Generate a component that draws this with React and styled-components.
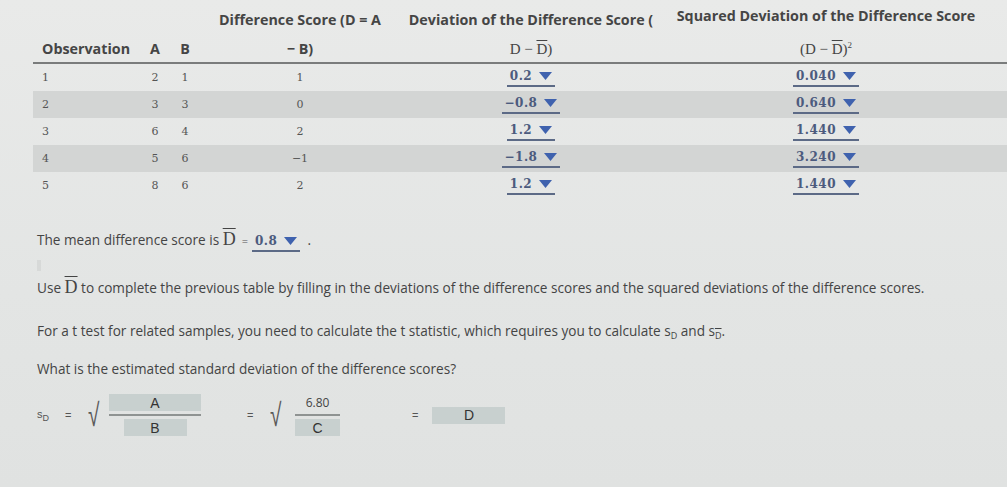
import styled, { createGlobalStyle } from "styled-components";

const Global = createGlobalStyle`
  body {
    margin: 0;
    background: #e5e7e6;
    font-family: "Open Sans", "Liberation Sans", sans-serif;
    color: #4a4a4a;
  }
`;

const Page = styled.div`
  width: 1007px;
  height: 487px;
  overflow: hidden;
  background: linear-gradient(180deg, #e9eae9 0%, #e3e5e4 60%, #e0e2e1 100%);
`;

const Table = styled.div`
  margin-left: 33px;
  padding-top: 6px;
  display: grid;
  grid-template-columns: 107px 30px 30px 200px 262px 328px 1fr;
`;

const HeadCell = styled.div`
  display: flex;
  flex-direction: column;
  justify-content: flex-end;
  align-items: ${(p) => (p.$left ? "flex-start" : "center")};
  padding-left: ${(p) => (p.$left ? "9px" : "0")};
  padding-bottom: 4px;
  gap: 11px;
  height: 52px;
  font-weight: 700;
  font-size: 14.3px;
  line-height: 18px;
  color: #454545;
  white-space: nowrap;
  border-bottom: 2px solid #7a7c7c;
`;

const Row = styled.div`
  display: contents;
  & > div {
    background: ${(p) => (p.$shade ? "#d3d5d4" : "transparent")};
  }
`;

const Cell = styled.div`
  height: 27px;
  display: flex;
  align-items: center;
  justify-content: ${(p) => (p.$left ? "flex-start" : "center")};
  padding-left: ${(p) => (p.$left ? "9px" : "0")};
  font-family: "DejaVu Serif", "Liberation Serif", serif;
  font-size: 11px;
  color: #555;
`;

const Math = styled.span`
  font-family: "Liberation Serif", "DejaVu Serif", serif;
  font-weight: 400;
  font-size: ${(p) => p.$size || 15}px;
`;

const Bar = styled.span`
  text-decoration: overline;
`;

const Select = styled.span`
  display: inline-flex;
  align-items: center;
  gap: 7px;
  padding: 0 3px 1px;
  border-bottom: 2px solid #5c6a86;
  font-family: "DejaVu Serif", "Liberation Serif", serif;
  font-weight: 700;
  font-size: 12px;
  letter-spacing: 0.5px;
  color: #4c5b7e;
  line-height: 16px;
`;

const Arrow = () => (
  <svg width="13" height="8" viewBox="0 0 13 8">
    <polygon points="0,0 13,0 6.5,8" fill="#3f62ae" />
  </svg>
);

const Body = styled.div`
  padding: 0 0 0 37px;
  font-size: 13.6px;
  color: #444;
`;

const Para = styled.p`
  margin: 0;
  margin-top: ${(p) => p.$top}px;
  line-height: 20px;
  height: 20px;
  white-space: nowrap;
`;

const Mark = styled.div`
  width: 4px;
  height: 11px;
  margin-top: 11px;
  background: #d7d9d8;
`;

const Sub = styled.span`
  font-size: 9px;
  vertical-align: -3px;
`;

const Formula = styled.div`
  margin-top: 15px;
  display: flex;
  align-items: center;
  font-family: "Liberation Sans", "Open Sans", sans-serif;
  color: #3a3a3a;
`;

const Sym = styled.span`
  font-size: ${(p) => p.$size || 12}px;
  margin: 0 ${(p) => p.$mr || 0}px 0 ${(p) => p.$ml || 0}px;
  color: #555;
`;

const Root = styled.span`
  font-family: "DejaVu Sans", sans-serif;
  font-size: 32px;
  font-weight: 200;
  color: #5a5a5a;
  margin-left: ${(p) => p.$ml}px;
  transform: scaleX(0.65);
  line-height: 32px;
`;

const Frac = styled.div`
  display: flex;
  flex-direction: column;
  align-items: center;
  margin-left: ${(p) => p.$ml}px;
  width: ${(p) => p.$w}px;
  gap: 3px;
`;

const FracLine = styled.div`
  width: 100%;
  height: 2px;
  background: #8f9392;
`;

const Box = styled.div`
  width: ${(p) => p.$w}px;
  height: 17px;
  margin-left: ${(p) => p.$ml || 0}px;
  background: #c8d0cf;
  display: flex;
  align-items: center;
  justify-content: center;
  font-size: 14px;
  color: #333;
`;

const Plain = styled.div`
  height: 17px;
  display: flex;
  align-items: center;
  font-family: "Open Sans", sans-serif;
  font-size: 12px;
  color: #444;
`;

const rows = [
  [1, 2, 1, 1, "0.2", "0.040"],
  [2, 3, 3, 0, "\u22120.8", "0.640"],
  [3, 6, 4, 2, "1.2", "1.440"],
  [4, 5, 6, "\u22121", "\u22121.8", "3.240"],
  [5, 8, 6, 2, "1.2", "1.440"],
];

export default function App() {
  return (
    <Page>
      <Global />
      <Table>
        <HeadCell $left>Observation</HeadCell>
        <HeadCell>A</HeadCell>
        <HeadCell>B</HeadCell>
        <HeadCell>
          <span>Difference Score (D = A</span>
          <span>− B)</span>
        </HeadCell>
        <HeadCell>
          <span>Deviation of the Difference Score (</span>
          <Math>
            D − <Bar>D</Bar>)
          </Math>
        </HeadCell>
        <HeadCell>
          <span>Squared Deviation of the Difference Score</span>
          <Math>
            (D − <Bar>D</Bar>)<sup style={{ fontSize: 9 }}>2</sup>
          </Math>
        </HeadCell>
        <HeadCell />
        {rows.map((r, i) => (
          <Row key={r[0]} $shade={i % 2 === 1}>
            <Cell $left>{r[0]}</Cell>
            <Cell>{r[1]}</Cell>
            <Cell>{r[2]}</Cell>
            <Cell>{r[3]}</Cell>
            <Cell>
              <Select>
                {r[4]}
                <Arrow />
              </Select>
            </Cell>
            <Cell>
              <Select>
                {r[5]}
                <Arrow />
              </Select>
            </Cell>
            <Cell />
          </Row>
        ))}
      </Table>
      <Body>
        <Para $top={30}>
          The mean difference score is <Math $size={18}><Bar>D</Bar></Math>
          <Sym $size={11} $ml={6} $mr={4}>=</Sym>
          <Select>
            0.8
            <Arrow />
          </Select>
          <span>&nbsp; .</span>
        </Para>
        <Mark />
        <Para $top={6}>
          Use <Math $size={18}><Bar>D</Bar></Math> to complete the previous table by filling in the
          deviations of the difference scores and the squared deviations of the difference scores.
        </Para>
        <Para $top={24}>
          For a t test for related samples, you need to calculate the t statistic, which requires you to
          calculate s<Sub>D</Sub> and s<Sub><Bar>D</Bar></Sub>.
        </Para>
        <Para $top={18}>What is the estimated standard deviation of the difference scores?</Para>
        <Formula>
          <Sym $size={11}>
            s<Sub>D</Sub>
          </Sym>
          <Sym $size={11} $ml={16}>=</Sym>
          <Root $ml={14}>√</Root>
          <Frac $ml={6} $w={92}>
            <Box $w={92}>A</Box>
            <FracLine />
            <Box $w={63}>B</Box>
          </Frac>
          <Sym $size={11} $ml={46}>=</Sym>
          <Root $ml={14}>√</Root>
          <Frac $ml={10} $w={45}>
            <Plain>6.80</Plain>
            <FracLine />
            <Box $w={45}>C</Box>
          </Frac>
          <Sym $size={11} $ml={72}>=</Sym>
          <Box $w={73} $ml={14}>D</Box>
        </Formula>
      </Body>
    </Page>
  );
}
